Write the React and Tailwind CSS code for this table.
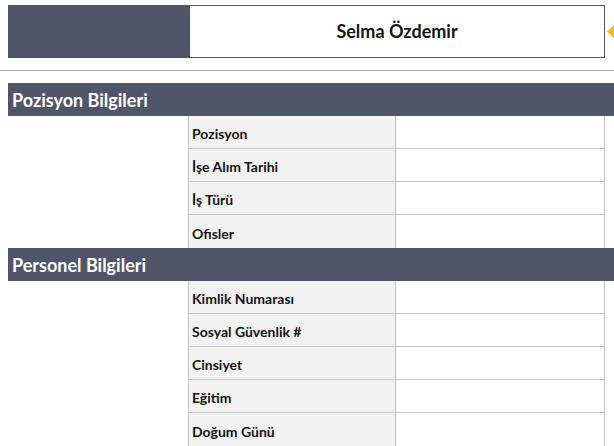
import React from "react";

const sections = [
  {
    title: "Pozisyon Bilgileri",
    rows: ["Pozisyon", "İşe Alım Tarihi", "İş Türü", "Ofisler"],
  },
  {
    title: "Personel Bilgileri",
    rows: ["Kimlik Numarası", "Sosyal Güvenlik #", "Cinsiyet", "Eğitim", "Doğum Günü"],
  },
];

const App = () => {
  return (
    <div className="w-[614px] h-[446px] overflow-hidden bg-white font-['Lato','Noto_Sans',sans-serif] text-[#141414]">
      {/* Header */}
      <div className="pt-[5px] pl-2 flex items-center">
        <div className="w-[181px] h-[53px] shrink-0 bg-[#505669]"></div>
        <div className="w-[416px] h-[53px] shrink-0 border border-[#505669] flex items-center justify-center text-[18px] font-bold">
          Selma Özdemir
        </div>
        <div className="ml-[4px] w-[9px] h-[9px] shrink-0 rotate-45 bg-[#f6b91b]"></div>
      </div>

      <div className="mt-[12px] h-px bg-[#a6a6a6]"></div>

      <div className="mt-[12px]">
        {sections.map((section) => (
          <div key={section.title}>
            <div className="ml-2 h-[33px] bg-[#505669] flex items-center pl-1 pt-[2px] text-white text-[18px] font-bold">
              {section.title}
            </div>
            <div className="pl-[188px]">
              {section.rows.map((row, i) => (
                <div
                  key={row}
                  className={`flex w-[417px] h-[33px] ${i < section.rows.length - 1 ? "border-b border-[#c6c6c6]" : ""}`}
                >
                  <div className="w-[208px] shrink-0 bg-[#f2f2f3] border-l border-r border-[#c6c6c6] flex items-center pl-[3px] pt-[3px] text-[14px] font-bold">
                    {row}
                  </div>
                  <div className="w-[209px] shrink-0 border-r border-[#c6c6c6]"></div>
                </div>
              ))}
            </div>
          </div>
        ))}
      </div>
    </div>
  );
};

export default App;
